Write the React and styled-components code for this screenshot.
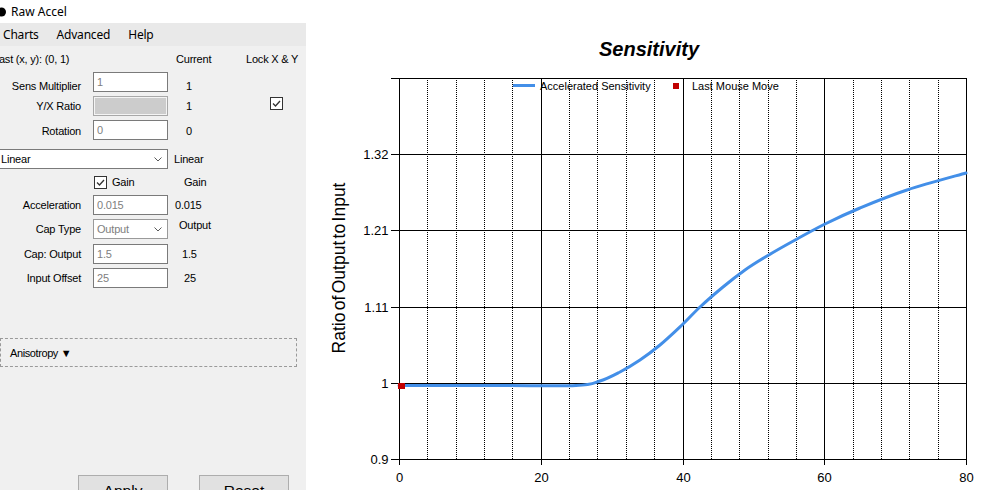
import React from "react";
import styled, { createGlobalStyle } from "styled-components";

const GlobalStyle = createGlobalStyle`
  html, body {
    margin: 0;
    padding: 0;
    background: #ffffff;
    overflow: hidden;
  }
  body {
    font-family: "Liberation Sans", Arial, sans-serif;
  }
`;

// chart geometry, in page pixels
const PLOT = { left: 399, right: 966, top: 78, bottom: 459 };
const X_STEP = (PLOT.right - PLOT.left) / 20;
const Y_STEP = (PLOT.bottom - PLOT.top) / 5;
const Y_LABELS = ["0.9", "1", "1.11", "1.21", "1.32"];
const X_LABELS = ["0", "20", "40", "60", "80"];

const CURVE = [
  [399, 385.5],
  [500, 385.5],
  [576, 385.5],
  [600, 381],
  [620, 372],
  [640, 360],
  [660, 345],
  [682, 325],
  [700, 307],
  [723, 287],
  [745, 270],
  [767, 256],
  [797, 239],
  [825, 224],
  [860, 208],
  [907, 190],
  [966, 173],
];

function smoothPath(pts) {
  let d = `M${pts[0][0]},${pts[0][1]}`;
  for (let i = 0; i < pts.length - 1; i++) {
    const p0 = pts[i - 1] || pts[i];
    const p1 = pts[i];
    const p2 = pts[i + 1];
    const p3 = pts[i + 2] || p2;
    const c1x = p1[0] + (p2[0] - p0[0]) / 6;
    const c1y = p1[1] + (p2[1] - p0[1]) / 6;
    const c2x = p2[0] - (p3[0] - p1[0]) / 6;
    const c2y = p2[1] - (p3[1] - p1[1]) / 6;
    d += ` C${c1x.toFixed(1)},${c1y.toFixed(1)} ${c2x.toFixed(1)},${c2y.toFixed(1)} ${p2[0]},${p2[1]}`;
  }
  return d;
}

const px = (v) => Math.round(v) + 0.5;

function Chevron() {
  return (
    <svg width="8" height="5" viewBox="0 0 8 5">
      <polyline points="0.5,0.5 4,4 7.5,0.5" fill="none" stroke="#5a5a5a" strokeWidth="1" />
    </svg>
  );
}

function CheckBox() {
  return (
    <Box>
      <svg width="11" height="11" viewBox="0 0 11 11">
        <polyline points="2,5.5 4.5,8 9,3" fill="none" stroke="#333" strokeWidth="1.3" />
      </svg>
    </Box>
  );
}

function SensitivityChart() {
  const minors = [];
  const majors = [];
  for (let k = 0; k <= 20; k++) {
    const x = px(PLOT.left + k * X_STEP);
    if (k % 5 === 0) majors.push(x);
    else minors.push(x);
  }
  const rows = [];
  for (let j = 0; j <= 5; j++) rows.push(px(PLOT.bottom - j * Y_STEP));

  return (
    <svg width="685" height="490" viewBox="306 0 685 490" style={{ display: "block" }}>
      <text
        x="649"
        y="56"
        textAnchor="middle"
        fontFamily="Liberation Sans, Arial, sans-serif"
        fontSize="20"
        fontWeight="bold"
        fontStyle="italic"
        fill="#000"
      >
        Sensitivity
      </text>

      <g shapeRendering="crispEdges" stroke="#000" strokeWidth="1">
        {minors.map((x) => (
          <line key={"m" + x} x1={x} x2={x} y1={PLOT.top} y2={PLOT.bottom} strokeDasharray="1 1" />
        ))}
        {majors.map((x) => (
          <line key={"v" + x} x1={x} x2={x} y1={PLOT.top} y2={PLOT.bottom + 6} />
        ))}
        {rows.map((y) => (
          <line key={"h" + y} x1={391} x2={PLOT.right} y1={y} y2={y} />
        ))}
      </g>

      <g fontFamily="Liberation Sans, Arial, sans-serif" fontSize="13" fill="#000">
        {Y_LABELS.map((t, j) => (
          <text key={t} x="388.5" y={rows[j] + 4.5} textAnchor="end">
            {t}
          </text>
        ))}
        {X_LABELS.map((t, k) => (
          <text key={t} x={majors[k]} y="481.5" textAnchor="middle">
            {t}
          </text>
        ))}
      </g>

      <text
        transform="translate(345 268) rotate(-90)"
        textAnchor="middle"
        fontFamily="Liberation Sans, Arial, sans-serif"
        fontSize="17.5"
        wordSpacing="-2.5"
        fill="#000"
      >
        Ratio of Output to Input
      </text>

      <g fontFamily="Liberation Sans, Arial, sans-serif" fontSize="11" fill="#000">
        <line x1="513" x2="535" y1="85.5" y2="85.5" stroke="#438fe8" strokeWidth="3" />
        <text x="540" y="90">Accelerated Sensitivity</text>
        <rect x="673" y="83" width="6" height="6" fill="#c00000" />
        <text x="692" y="90">Last Mouse Move</text>
      </g>

      <path
        d={smoothPath(CURVE)}
        fill="none"
        stroke="#438fe8"
        strokeWidth="3"
        strokeLinecap="round"
        strokeLinejoin="round"
      />
      <rect x="398" y="383" width="7" height="6" fill="#c00000" />
    </svg>
  );
}

export default function App() {
  return (
    <Window>
      <GlobalStyle />
      <Side>
        <TitleBar>
          <AppIcon width="7" height="10" viewBox="0 0 7 10">
            <circle cx="1.5" cy="5" r="4.5" fill="#000" />
          </AppIcon>
          Raw Accel
        </TitleBar>
        <MenuBar>
          <MenuItem>Charts</MenuItem>
          <MenuItem>Advanced</MenuItem>
          <MenuItem>Help</MenuItem>
        </MenuBar>

        <Form>
          <HeaderRow>
            <LastMove>Last (x, y): (0, 1)</LastMove>
            <Value $indent={8}>Current</Value>
            <LockCol>Lock X &amp; Y</LockCol>
          </HeaderRow>

          <Row $gap={4}>
            <Label $drop={8}>Sens Multiplier</Label>
            <Field readOnly value="1" />
            <Value $indent={18} $drop={8}>
              1
            </Value>
          </Row>
          <Row $gap={4}>
            <Label>Y/X Ratio</Label>
            <Field readOnly value="" $disabled />
            <Value $indent={18}>1</Value>
            <LockCol $pad={24} $start>
              <CheckBox />
            </LockCol>
          </Row>
          <Row $gap={9}>
            <Label $drop={2}>Rotation</Label>
            <Field readOnly value="0" />
            <Value $indent={18} $drop={2}>
              0
            </Value>
          </Row>

          <Row $gap={4}>
            <Select $wide>
              <span>Linear</span>
              <Chevron />
            </Select>
            <Value $indent={6}>Linear</Value>
          </Row>
          <Row $gap={4} $height={18}>
            <CheckCell>
              <CheckBox />
              Gain
            </CheckCell>
            <Value $indent={16}>Gain</Value>
          </Row>

          <Row $gap={4}>
            <Label>Acceleration</Label>
            <Field readOnly value="0.015" />
            <Value $indent={7}>0.015</Value>
          </Row>
          <Row $gap={5}>
            <Label>Cap Type</Label>
            <Select $muted>
              <span>Output</span>
              <Chevron />
            </Select>
            <Value $indent={11} $start>
              Output
            </Value>
          </Row>
          <Row $gap={4}>
            <Label>Cap: Output</Label>
            <Field readOnly value="1.5" />
            <Value $indent={14}>1.5</Value>
          </Row>
          <Row $gap={50}>
            <Label>Input Offset</Label>
            <Field readOnly value="25" />
            <Value $indent={16}>25</Value>
          </Row>

          <Anisotropy>Anisotropy ▼</Anisotropy>

          <Buttons>
            <Button>Apply</Button>
            <Button>Reset</Button>
          </Buttons>
        </Form>
      </Side>

      <ChartPane>
        <SensitivityChart />
      </ChartPane>
    </Window>
  );
}

const Window = styled.div`
  display: flex;
  width: 991px;
  height: 490px;
  overflow: hidden;
  background: #ffffff;
`;

const Side = styled.div`
  width: 306px;
  flex-shrink: 0;
  display: flex;
  flex-direction: column;
  background: #f0f0f0;
  overflow: hidden;
  font-size: 11px;
  letter-spacing: -0.2px;
  color: #000;
`;

const TitleBar = styled.div`
  height: 23px;
  flex-shrink: 0;
  display: flex;
  align-items: center;
  gap: 4px;
  background: #ffffff;
  font-family: "Noto Sans", "Open Sans", sans-serif;
  font-size: 12px;
  letter-spacing: 0;
`;

const AppIcon = styled.svg`
  display: block;
  margin-top: 1px;
`;

const MenuBar = styled.div`
  height: 23px;
  flex-shrink: 0;
  display: flex;
  align-items: center;
  gap: 18px;
  padding-left: 3px;
  background: #e9e9e9;
  font-family: "Noto Sans", "Open Sans", sans-serif;
  font-size: 12px;
  letter-spacing: -0.2px;
`;

const MenuItem = styled.span`
  line-height: 23px;
`;

const Form = styled.div`
  display: flex;
  flex-direction: column;
  padding-top: 6px;
`;

const HeaderRow = styled.div`
  display: flex;
  align-items: center;
  height: 13px;
  margin-bottom: 7px;
`;

const LastMove = styled.span`
  width: 175px;
  flex-shrink: 0;
  margin-left: -7px;
  white-space: nowrap;
`;

const Row = styled.div`
  display: flex;
  align-items: center;
  height: ${(p) => p.$height || 20}px;
  margin-bottom: ${(p) => p.$gap}px;
`;

const Label = styled.span`
  width: 81px;
  flex-shrink: 0;
  margin-top: ${(p) => p.$drop || 0}px;
  text-align: right;
  white-space: nowrap;
`;

const Field = styled.input`
  box-sizing: border-box;
  width: 75px;
  height: 20px;
  margin: 0 0 0 12px;
  padding: 0 3px;
  border: 1px solid ${(p) => (p.$disabled ? "#a8a8a8" : "#7a7a7a")};
  background: ${(p) => (p.$disabled ? "#cccccc" : "#ffffff")};
  box-shadow: ${(p) => (p.$disabled ? "inset 0 0 0 1px #f4f4f4" : "none")};
  color: #808080;
  font-family: "Liberation Sans", Arial, sans-serif;
  font-size: 11px;
  letter-spacing: -0.2px;
  outline: none;
`;

const Select = styled.div`
  box-sizing: border-box;
  display: flex;
  align-items: center;
  justify-content: space-between;
  width: ${(p) => (p.$wide ? 171 : 75)}px;
  height: 20px;
  margin-left: ${(p) => (p.$wide ? -3 : 12)}px;
  padding: 0 5px 0 3px;
  border: 1px solid ${(p) => (p.$muted ? "#9a9a9a" : "#7a7a7a")};
  background: #ffffff;
  color: ${(p) => (p.$muted ? "#808080" : "#000")};

  svg {
    display: block;
  }
`;

const Value = styled.span`
  width: 78px;
  flex-shrink: 0;
  box-sizing: border-box;
  padding-left: ${(p) => p.$indent}px;
  margin-top: ${(p) => p.$drop || 0}px;
  align-self: ${(p) => (p.$start ? "flex-start" : "center")};
  white-space: nowrap;
`;

const LockCol = styled.span`
  display: flex;
  padding-left: ${(p) => p.$pad || 0}px;
  align-self: ${(p) => (p.$start ? "flex-start" : "center")};
  margin-top: ${(p) => (p.$start ? 1 : 0)}px;
  white-space: nowrap;
`;

const CheckCell = styled.span`
  width: 168px;
  flex-shrink: 0;
  box-sizing: border-box;
  padding-left: 94px;
  display: flex;
  align-items: center;
  gap: 5px;
`;

const Box = styled.span`
  box-sizing: border-box;
  width: 13px;
  height: 13px;
  display: flex;
  align-items: center;
  justify-content: center;
  border: 1px solid #333333;
  background: #ffffff;

  svg {
    display: block;
  }
`;

const Anisotropy = styled.div`
  box-sizing: border-box;
  width: 297px;
  height: 29px;
  display: flex;
  align-items: center;
  padding-left: 9px;
  border: 1px dashed #9a9a9a;
  margin-bottom: 108px;
  letter-spacing: -0.4px;
`;

const Buttons = styled.div`
  display: flex;
  gap: 31px;
  padding-left: 78px;
`;

const Button = styled.button`
  box-sizing: border-box;
  width: 90px;
  height: 32px;
  padding: 0;
  border: 1px solid #adadad;
  background: #e1e1e1;
  font-family: "Liberation Sans", Arial, sans-serif;
  font-size: 15.5px;
  color: #000;
`;

const ChartPane = styled.div`
  flex: 1;
  background: #ffffff;
`;
